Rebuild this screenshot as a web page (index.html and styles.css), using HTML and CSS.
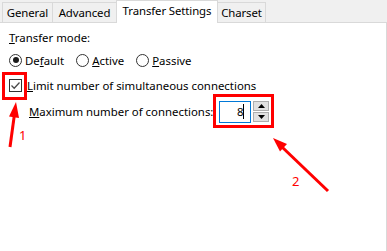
FILE: index.html
```html
<!DOCTYPE html>
<html>
<head>
<meta charset="utf-8">
<link rel="stylesheet" href="styles.css">
</head>
<body>
<div class="window">
  <div class="tabs">
    <div class="tab t-general">General</div>
    <div class="tab t-advanced">Advanced</div>
    <div class="tab t-transfer active">Transfer Settings</div>
    <div class="tab t-charset">Charset</div>
  </div>
  <div class="panel">
    <div class="row-label"><u>T</u>ransfer mode:</div>
    <div class="radios">
      <span class="radio"><span class="circle on"></span><span class="rtext">De<u>f</u>ault</span></span>
      <span class="radio"><span class="circle"></span><span class="rtext"><u>A</u>ctive</span></span>
      <span class="radio"><span class="circle"></span><span class="rtext"><u>P</u>assive</span></span>
    </div>
    <div class="check-row">
      <span class="checkbox">
        <svg width="11" height="11" viewBox="0 0 11 11"><path d="M1.5 5.5 L4.2 8.2 L9.5 2.5" fill="none" stroke="#4a4a4a" stroke-width="1.3"/></svg>
      </span>
      <span class="ctext"><u>L</u>imit number of simultaneous connections</span>
    </div>
    <div class="max-row">
      <span class="mtext"><u>M</u>aximum number of connections:</span>
      <span class="numbox"><span class="numval">8</span><span class="caret"></span></span>
      <span class="spin">
        <span class="sbtn"><svg width="7" height="4" viewBox="0 0 7 4"><path d="M0 4 L3.5 0 L7 4 Z" fill="#000"/></svg></span>
        <span class="sbtn"><svg width="7" height="4" viewBox="0 0 7 4"><path d="M0 0 L7 0 L3.5 4 Z" fill="#000"/></svg></span>
      </span>
    </div>
  </div>

  <div class="hl hl-check"></div>
  <div class="hl hl-spin"></div>
  <svg class="arrows" width="387" height="251" viewBox="0 0 387 251">
    <line x1="10" y1="147" x2="14.5" y2="114" stroke="#ff0000" stroke-width="3"/>
    <polygon points="16,102 19,118 9,116.5" fill="#ff0000"/>
    <line x1="328" y1="191" x2="282" y2="147" stroke="#ff0000" stroke-width="3"/>
    <polygon points="273,138 287,144 280,151.5" fill="#ff0000"/>
  </svg>
  <span class="anum n1">1</span>
  <span class="anum n2">2</span>
</div>
</body>
</html>
```
FILE: styles.css
```css
html, body {
  margin: 0;
  padding: 0;
  background: #ffffff;
}

.window {
  position: relative;
  width: 387px;
  height: 251px;
  overflow: hidden;
  font-family: "Noto Sans", "Open Sans", sans-serif;
  font-size: 11.4px;
  color: #000;
  background: #fff;
  display: flex;
  flex-direction: column;
}

.tabs {
  display: flex;
  align-items: flex-end;
  height: 22px;
  padding-left: 2px;
  background: #f0f0f0;
  flex: none;
}

.tab {
  box-sizing: border-box;
  height: 20px;
  border: 1px solid #d9d9d9;
  border-bottom: none;
  background: #f0f0f0;
  margin-left: -1px;
  text-align: center;
  line-height: 19px;
  white-space: nowrap;
  letter-spacing: -0.1px;
}

.t-general { margin-left: 0; width: 51px; }
.t-advanced { width: 65px; }
.t-transfer { width: 102px; }
.t-charset { width: 49px; }

.tab.active {
  height: 23px;
  margin-bottom: -1px;
  background: #fff;
  line-height: 20px;
  position: relative;
  z-index: 1;
}

.panel {
  flex: 1;
  border-top: 1px solid #d9d9d9;
  border-right: 1px solid #d9d9d9;
  padding-left: 9px;
  display: flex;
  flex-direction: column;
}

.row-label {
  margin-top: 7px;
  height: 15px;
  line-height: 15px;
}

.radios {
  margin-top: 7px;
  height: 16px;
  display: flex;
  align-items: center;
}

.radio {
  display: flex;
  align-items: center;
  margin-right: 12px;
}

.circle {
  box-sizing: border-box;
  width: 13px;
  height: 13px;
  border: 1px solid #333;
  border-radius: 50%;
  display: flex;
  align-items: center;
  justify-content: center;
  margin-right: 3px;
}

.circle.on::after {
  content: "";
  width: 6px;
  height: 6px;
  border-radius: 50%;
  background: #1a1a1a;
}

.check-row {
  margin-top: 10px;
  height: 15px;
  display: flex;
  align-items: center;
}

.checkbox {
  box-sizing: border-box;
  width: 13px;
  height: 13px;
  border: 1px solid #333;
  display: flex;
  align-items: center;
  justify-content: center;
  margin-right: 5px;
}

.max-row {
  margin-top: 8px;
  height: 21px;
  display: flex;
  align-items: center;
  padding-left: 20px;
}

.mtext {
  margin-right: 6px;
}

.numbox {
  box-sizing: border-box;
  width: 32px;
  height: 22px;
  border: 1px solid #0078d7;
  display: flex;
  align-items: center;
  justify-content: flex-end;
  padding-right: 6px;
}

.numval {
  line-height: 15px;
}

.caret {
  width: 1px;
  height: 15px;
  background: #000;
}

.spin {
  display: flex;
  flex-direction: column;
  gap: 1px;
  margin-left: 2px;
}

.sbtn {
  box-sizing: border-box;
  width: 16px;
  height: 10px;
  background: #e1e1e1;
  border: 1px solid #adadad;
  display: flex;
  align-items: center;
  justify-content: center;
}

.sbtn svg { display: block; }

.hl {
  position: absolute;
  box-sizing: border-box;
  border: 3px solid #ff0000;
}

.hl-check {
  left: 2px;
  top: 72px;
  width: 25px;
  height: 28px;
}

.hl-spin {
  left: 213px;
  top: 94px;
  width: 61px;
  height: 34px;
}

.arrows {
  position: absolute;
  left: 0;
  top: 0;
}

.anum {
  position: absolute;
  color: #ff0000;
  font-family: "Noto Sans", sans-serif;
  font-size: 13px;
  line-height: 13px;
}

.n1 { left: 19px; top: 129px; }
.n2 { left: 292px; top: 175px; }
```
